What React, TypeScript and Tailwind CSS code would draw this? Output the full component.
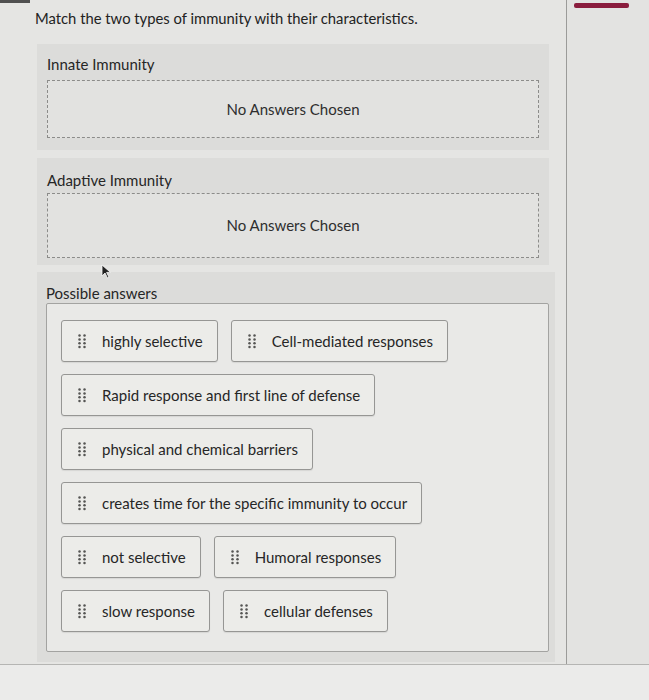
import React from 'react';

const font = { fontFamily: 'Lato, "Open Sans", "Noto Sans", sans-serif' };

const DragHandle: React.FC = () => (
  <svg width="8" height="15" viewBox="0 0 8 15" className="shrink-0">
    {[0, 1].map((c) =>
      [0, 1, 2, 3].map((r) => (
        <circle key={`${c}-${r}`} cx={1.5 + c * 5} cy={1.6 + r * 3.8} r={1.25} fill="#555553" />
      ))
    )}
  </svg>
);

const Chip: React.FC<{ label: string }> = ({ label }) => (
  <div className="flex items-center h-[42px] pl-[16px] pr-[14px] gap-[16px] bg-[#ecece9] border border-[#969694] rounded-[3px] shadow-[0_1px_1px_rgba(0,0,0,0.08)]">
    <DragHandle />
    <span className="text-[15px] text-[#262626] whitespace-nowrap">{label}</span>
  </div>
);

const rows: string[][] = [
  ['highly selective', 'Cell-mediated responses'],
  ['Rapid response and first line of defense'],
  ['physical and chemical barriers'],
  ['creates time for the specific immunity to occur'],
  ['not selective', 'Humoral responses'],
  ['slow response', 'cellular defenses'],
];

const DropZone: React.FC<{ title: string; boxHeight: string; padTop: string; padBottom: string; gap: string; className?: string }> = ({
  title,
  boxHeight,
  padTop,
  padBottom,
  gap,
  className,
}) => (
  <div className={`ml-[37px] w-[512px] bg-[#dcdcda] px-[10px] ${padTop} ${padBottom} ${className ?? ''}`}>
    <div className={`text-[15px] leading-[20px] text-[#262626] ${gap}`}>{title}</div>
    <div className={`${boxHeight} border border-dashed border-[#8c8c8a] bg-[#e2e2e0] flex items-center justify-center`}>
      <span className="text-[15px] text-[#2e2e2e]">No Answers Chosen</span>
    </div>
  </div>
);

export default function App() {
  return (
    <div className="relative w-[649px] h-[700px] overflow-hidden bg-[#e5e5e3] flex flex-col" style={font}>
      <div className="flex h-[664px]">
        {/* main column */}
        <div className="w-[566px] flex flex-col">
          <div className="h-[3px] w-[30px] bg-[#505050]" />
          <div className="pl-[35px] pt-[6px] text-[14.8px] leading-[18px] text-[#222]">
            Match the two types of immunity with their characteristics.
          </div>

          <DropZone
            title="Innate Immunity"
            boxHeight="h-[58px]"
            padTop="pt-[10px]"
            padBottom="pb-[12px]"
            gap="mb-[6px]"
            className="mt-[17px]"
          />
          <DropZone
            title="Adaptive Immunity"
            boxHeight="h-[65px]"
            padTop="pt-[12px]"
            padBottom="pb-[7px]"
            gap="mb-[3px]"
            className="mt-[8px]"
          />

          <div className="mt-[7px] ml-[37px] w-[518px] bg-[#dcdcda] pl-[9px] pr-[6px] pt-[11px] pb-[10px]">
            <div className="text-[15px] leading-[20px] text-[#262626]">Possible answers</div>
            <div className="h-[349px] bg-[#e9e9e7] border border-[#a3a3a1] rounded-[2px] pl-[14px] pt-[16px] flex flex-col gap-[12px]">
              {rows.map((row, i) => (
                <div key={i} className="flex gap-[13px]">
                  {row.map((label) => (
                    <Chip key={label} label={label} />
                  ))}
                </div>
              ))}
            </div>
          </div>
        </div>

        {/* right sidebar */}
        <div className="flex-1 border-l border-[#9b9b99] bg-[#e3e3e1]">
          <div className="mt-[3px] ml-[7px] h-[5px] w-[55px] rounded-[2px] bg-[#8a1d3d]" />
        </div>
      </div>
      <div className="flex-1 border-t border-[#b5b5b3] bg-[#ebebea]" />

      {/* mouse cursor */}
      <svg className="absolute left-[101px] top-[264px]" width="11" height="15" viewBox="0 0 11 15">
        <path d="M1 1 L1 12 L4 9 L6.5 14 L8 13.3 L5.6 8.4 L9.5 8.4 Z" fill="#222" stroke="#fafafa" strokeWidth="0.8" />
      </svg>
    </div>
  );
}
